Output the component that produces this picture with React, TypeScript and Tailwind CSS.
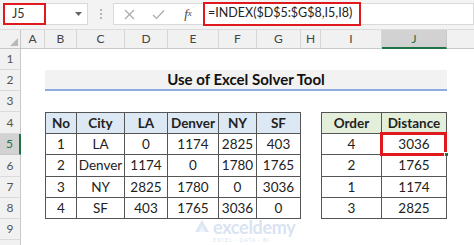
import React from "react";

const COLS = ["A", "B", "C", "D", "E", "F", "G", "H", "I", "J"];

const left = [
  ["No", "City", "LA", "Denver", "NY", "SF"],
  ["1", "LA", "0", "1174", "2825", "403"],
  ["2", "Denver", "1174", "0", "1780", "1765"],
  ["3", "NY", "2825", "1780", "0", "3036"],
  ["4", "SF", "403", "1765", "3036", "0"],
];
const right = [
  ["Order", "Distance"],
  ["4", "3036"],
  ["2", "1765"],
  ["1", "1174"],
  ["3", "2825"],
];

function RowHead({ n }: { n: number }) {
  const sel = n === 5;
  return (
    <div
      className={
        sel
          ? "flex items-center justify-center bg-[#d2d2d2] border-r-2 border-r-[#217346] border-b border-b-[#c8c8c8] text-[12px] text-[#217346]"
          : "flex items-center justify-center bg-[#f1f1f1] border-r border-r-[#c8c8c8] border-b border-b-[#dadada] text-[12px] text-[#555]"
      }
    >
      {n < 10 ? n : ""}
    </div>
  );
}

function TCell({
  text,
  first,
  header,
  green,
  sel,
}: {
  text: string;
  first?: boolean;
  header?: boolean;
  green?: boolean;
  sel?: boolean;
}) {
  let cls =
    "relative flex items-center justify-center border-r border-b border-[#555] text-[13.5px] text-[#222]";
  if (first) cls += " border-l";
  if (header) cls += " border-t font-bold text-[#111]";
  if (header && !green) cls += " bg-[#dde8f5]";
  if (header && green) cls += " bg-[#e3efdb]";
  return (
    <div className={cls}>
      {text}
      {sel && (
        <>
          <div className="absolute -left-[2px] -top-[2px] -right-[1px] -bottom-[2px] border-[3px] border-[#e0191e]" />
          <div className="absolute right-[-3px] bottom-[-3px] w-[5px] h-[5px] bg-[#217346] border border-white" />
        </>
      )}
    </div>
  );
}

export default function App() {
  const rows = [1, 2, 3, 4, 5, 6, 7, 8, 9, 10];
  return (
    <div className="relative w-[474px] h-[245px] overflow-hidden bg-white font-['Lato','Noto_Sans',sans-serif]">
      {/* toolbar */}
      <div className="flex items-start h-[30px] bg-[#f3f3f3] pt-[3px] border-b border-[#dcdcdc]">
        <div className="ml-[3px] flex h-[22px] w-[85px] bg-white border border-[#d9d9d9]">
          <div className="flex items-center w-[43px] h-[22px] -mt-[1px] -ml-[1px] border-2 border-[#e0191e] pl-[7px] text-[12.5px] text-[#333]">
            J5
          </div>
          <div className="flex-1 flex items-center justify-end pr-[5px]">
            <svg width="7" height="4" viewBox="0 0 7 4">
              <path d="M0 0 L7 0 L3.5 4 Z" fill="#666" />
            </svg>
          </div>
        </div>
        <div className="w-[25px] h-[22px] flex flex-col items-center justify-center gap-[2px]">
          <span className="w-[2px] h-[2px] bg-[#b5b5b5]" />
          <span className="w-[2px] h-[2px] bg-[#b5b5b5]" />
          <span className="w-[2px] h-[2px] bg-[#b5b5b5]" />
        </div>
        <div className="flex-1 flex items-center h-[22px] bg-white border border-[#d9d9d9]">
          <div className="w-[29px] flex justify-center ml-[1px]">
            <svg width="11" height="11" viewBox="0 0 11 11">
              <path d="M1 1 L10 10 M10 1 L1 10" stroke="#a9a9a9" strokeWidth="1.2" />
            </svg>
          </div>
          <div className="w-[29px] flex justify-center">
            <svg width="13" height="11" viewBox="0 0 13 11">
              <path d="M1 6 L4.5 9.5 L12 1.5" stroke="#a9a9a9" strokeWidth="1.2" fill="none" />
            </svg>
          </div>
          <div className="w-[30px] flex justify-center font-['Liberation_Serif',serif] italic text-[13px] text-[#444]">
            f<span className="text-[9px] mt-[3px]">x</span>
          </div>
          <div className="flex items-center h-[24px] w-[158px] -mt-[1px] border-2 border-[#e0191e] bg-white pl-[3px] text-[12.5px] text-[#222]">
            =INDEX($D$5:$G$8,I5,I8)
          </div>
        </div>
      </div>

      {/* sheet */}
      <div className="grid grid-cols-[21px_24px_32px_48px_43px_51px_38px_44px_20px_61px_65px_1fr] grid-rows-[19px_21px_21px_21px_22px_21px_22px_21px_21px_21px_21px]">
        {/* column header row */}
        <div className="relative bg-[#f1f1f1] border-r border-b border-[#c8c8c8]">
          <svg className="absolute right-[2px] bottom-[2px]" width="8" height="8" viewBox="0 0 8 8">
            <path d="M8 0 L8 8 L0 8 Z" fill="#b9b9b9" />
          </svg>
        </div>
        {COLS.map((c) =>
          c === "J" ? (
            <div
              key={c}
              className="flex items-center justify-center bg-[#d2d2d2] border-r border-r-[#c8c8c8] border-b-2 border-b-[#217346] text-[12px] text-[#217346]"
            >
              {c}
            </div>
          ) : (
            <div
              key={c}
              className="flex items-center justify-center bg-[#f1f1f1] border-r border-r-[#d6d6d6] border-b border-b-[#c8c8c8] text-[12px] text-[#444]"
            >
              {c}
            </div>
          )
        )}
        <div className="bg-[#f1f1f1] border-b border-[#c8c8c8]" />

        {rows.map((r) => {
          const cells: React.ReactNode[] = [<RowHead key="h" n={r} />];
          if (r === 2) {
            cells.push(<div key="a" />);
            cells.push(
              <div
                key="t"
                className="col-span-9 flex items-center justify-center bg-[#f2f2f2] border-b-2 border-[#8faadc] text-[15px] font-bold text-[#111]"
              >
                Use of Excel Solver Tool
              </div>
            );
            cells.push(<div key="z" />);
          } else if (r >= 4 && r <= 8) {
            const li = r - 4;
            cells.push(<div key="a" />);
            left[li].forEach((t, j) =>
              cells.push(<TCell key={"l" + j} text={t} first={j === 0} header={li === 0} />)
            );
            cells.push(<div key="h2" />);
            right[li].forEach((t, j) =>
              cells.push(
                <TCell
                  key={"r" + j}
                  text={t}
                  first={j === 0}
                  header={li === 0}
                  green
                  sel={li === 1 && j === 1}
                />
              )
            );
            cells.push(<div key="z" />);
          } else {
            for (let k = 0; k < 11; k++) cells.push(<div key={"e" + k} />);
          }
          return <React.Fragment key={r}>{cells}</React.Fragment>;
        })}
      </div>

      {/* watermark */}
      <div className="absolute left-[193px] top-[218px] flex items-start gap-[2px] opacity-50 pointer-events-none">
        <svg width="18" height="16" viewBox="0 0 18 16">
          <path d="M2 14 L9 2 L16 14 Z" fill="#bcd0ea" />
          <path d="M6 14 L9 8 L12 14 Z" fill="#e4edf8" />
        </svg>
        <div className="flex flex-col leading-none">
          <span className="text-[18px] leading-[18px] font-bold text-[#b4c8e4] tracking-[-0.3px]">exceldemy</span>
          <span className="text-[5px] leading-[6px] text-[#b4c8e4] tracking-[1px] mt-[1px]">EXCEL · DATA · BI</span>
        </div>
      </div>
    </div>
  );
}
